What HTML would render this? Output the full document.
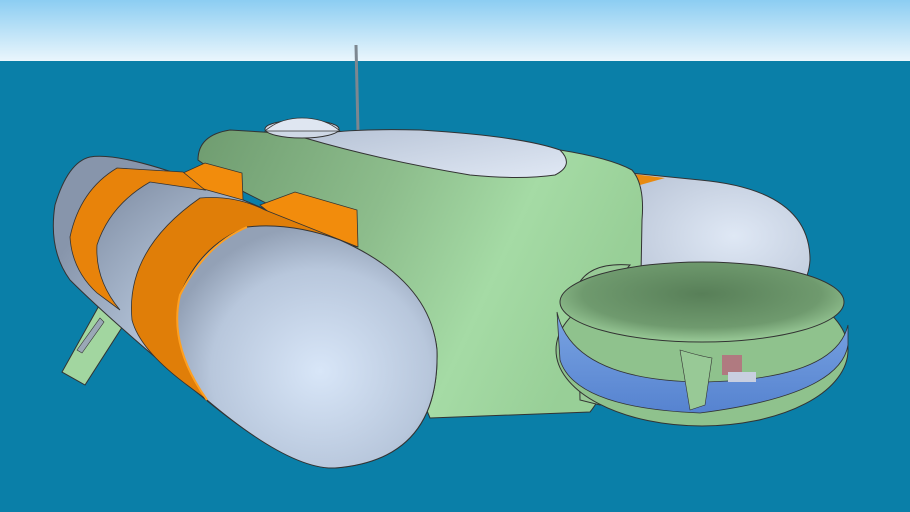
<!DOCTYPE html><html><head><style>html,body{margin:0;padding:0;width:910px;height:512px;overflow:hidden}</style></head><body>
<svg width="910" height="512" viewBox="0 0 910 512" xmlns="http://www.w3.org/2000/svg">
<defs>
<linearGradient id="sky" x1="0" y1="0" x2="0" y2="1"><stop offset="0" stop-color="#8ccdf2"/><stop offset="1" stop-color="#eaf6fc"/></linearGradient>
<radialGradient id="pont" cx="0.72" cy="0.7" r="0.8"><stop offset="0" stop-color="#d4e4f7"/><stop offset="0.6" stop-color="#b3c3d8"/><stop offset="1" stop-color="#8795ab"/></radialGradient>
<radialGradient id="cap" cx="0.55" cy="0.6" r="0.6"><stop offset="0" stop-color="#d8e6f8"/><stop offset="0.7" stop-color="#b8c7dc"/><stop offset="1" stop-color="#93a1b6"/></radialGradient>
<radialGradient id="pont2" cx="0.6" cy="0.5" r="0.7"><stop offset="0" stop-color="#dfe8f5"/><stop offset="1" stop-color="#b9c4d6"/></radialGradient>
<linearGradient id="body" x1="0" y1="0" x2="1" y2="0.3"><stop offset="0" stop-color="#6f9c70"/><stop offset="0.45" stop-color="#8dbd8c"/><stop offset="0.75" stop-color="#a5dba5"/><stop offset="1" stop-color="#98cf97"/></linearGradient>
<linearGradient id="win" x1="0" y1="0" x2="1" y2="1"><stop offset="0" stop-color="#b7c3d6"/><stop offset="1" stop-color="#e0e8f4"/></linearGradient>
<radialGradient id="ctop" cx="0.5" cy="0.4" r="0.6"><stop offset="0" stop-color="#587f58"/><stop offset="0.7" stop-color="#6f9a6e"/><stop offset="1" stop-color="#9acb98"/></radialGradient>
<linearGradient id="glass" x1="0" y1="0" x2="0" y2="1"><stop offset="0" stop-color="#7aa4e2"/><stop offset="1" stop-color="#5683d0"/></linearGradient>
</defs>
<rect x="0" y="0" width="910" height="61" fill="url(#sky)"/>
<rect x="0" y="61" width="910" height="451" fill="#0a7fa8"/>
<line x1="356" y1="45" x2="358" y2="132" stroke="#7d8790" stroke-width="3"/>
<path d="M620,172 L700,180 Q810,190 810,260 Q808,292 780,298 L640,300 Z" fill="url(#pont2)" stroke="#333" stroke-width="1"/>
<path d="M625,173 L665,178 L640,185 Z" fill="#e88a10"/>
<path d="M198,160 Q198,135 230,130 L560,150 Q610,158 632,170 Q645,185 642,220 L640,330 Q600,400 590,412 L430,418 L360,250 L240,190 Z" fill="url(#body)" stroke="#333" stroke-width="1"/>
<path d="M305,138 Q330,128 420,130 Q520,136 560,150 Q575,165 555,175 Q520,180 470,175 Q380,160 305,138 Z" fill="url(#win)" stroke="#333" stroke-width="1"/>
<ellipse cx="302" cy="129" rx="37" ry="9" fill="#cfd8e6" stroke="#333" stroke-width="1"/>
<path d="M265,131 Q280,118 302,118 Q325,118 340,131 Z" fill="#dfe6f1" stroke="#333" stroke-width="0.8"/>
<path d="M105,295 L130,315 L85,385 L62,372 Z" fill="#a2d6a0" stroke="#333" stroke-width="1"/>
<path d="M77,350 L100,318 L104,322 L82,353 Z" fill="#9aa8b6" stroke="#333" stroke-width="0.6"/>
<path d="M90,157 Q120,152 200,182 L320,232 Q430,280 437,350 Q440,460 335,468 Q290,470 200,395 Q110,320 70,280 Q48,250 55,205 Q68,162 90,157 Z" fill="url(#pont)" stroke="#333" stroke-width="1"/>
<path d="M183,173 L205,163 L242,173 L243,200 L200,188 Z" fill="#f28c0c" stroke="#333" stroke-width="0.8"/>
<path d="M260,205 L295,192 L357,210 L358,247 L285,225 Z" fill="#f28c0c" stroke="#333" stroke-width="0.8"/>
<path d="M117,168 L183,172 L205,190 L150,182 Q110,205 97,245 Q95,280 120,310 L97,293 Q72,270 70,237 Q80,190 117,168 Z" fill="#e8830a" stroke="#333" stroke-width="0.8"/>
<path d="M200,198 Q235,195 265,210 L358,247 L300,235 L247,227 Q205,245 180,295 Q168,345 207,400 L187,385 Q140,350 132,320 Q125,250 200,198 Z" fill="#e07e08" stroke="#333" stroke-width="0.8"/>
<path d="M247,227 Q290,222 340,240 Q430,280 437,350 Q440,460 335,468 Q290,470 207,400 Q168,345 180,295 Q200,245 247,227 Z" fill="url(#cap)" stroke="#333" stroke-width="1"/>
<path d="M247,227 Q205,245 180,295 Q168,345 207,400" fill="none" stroke="#ffa020" stroke-width="2"/>
<path d="M578,285 Q590,262 630,265 L600,300 L600,405 L580,400 Z" fill="#98c996" stroke="#333" stroke-width="1"/>
<ellipse cx="702" cy="350" rx="146" ry="76" fill="#8fc28d" stroke="#333" stroke-width="1"/>
<path d="M557,312 Q572,380 700,382 Q835,380 848,325 L848,345 Q840,395 700,413 Q575,408 560,360 Z" fill="url(#glass)" stroke="#333" stroke-width="0.8"/>
<path d="M680,350 Q700,356 712,358 L705,405 L690,410 Z" fill="#98c996" stroke="#333" stroke-width="0.6"/>
<rect x="722" y="355" width="20" height="20" fill="#b07a80"/>
<rect x="728" y="372" width="28" height="10" fill="#c8cfe0"/>
<ellipse cx="702" cy="302" rx="142" ry="40" fill="url(#ctop)" stroke="#333" stroke-width="1"/>
</svg>
</body></html>
